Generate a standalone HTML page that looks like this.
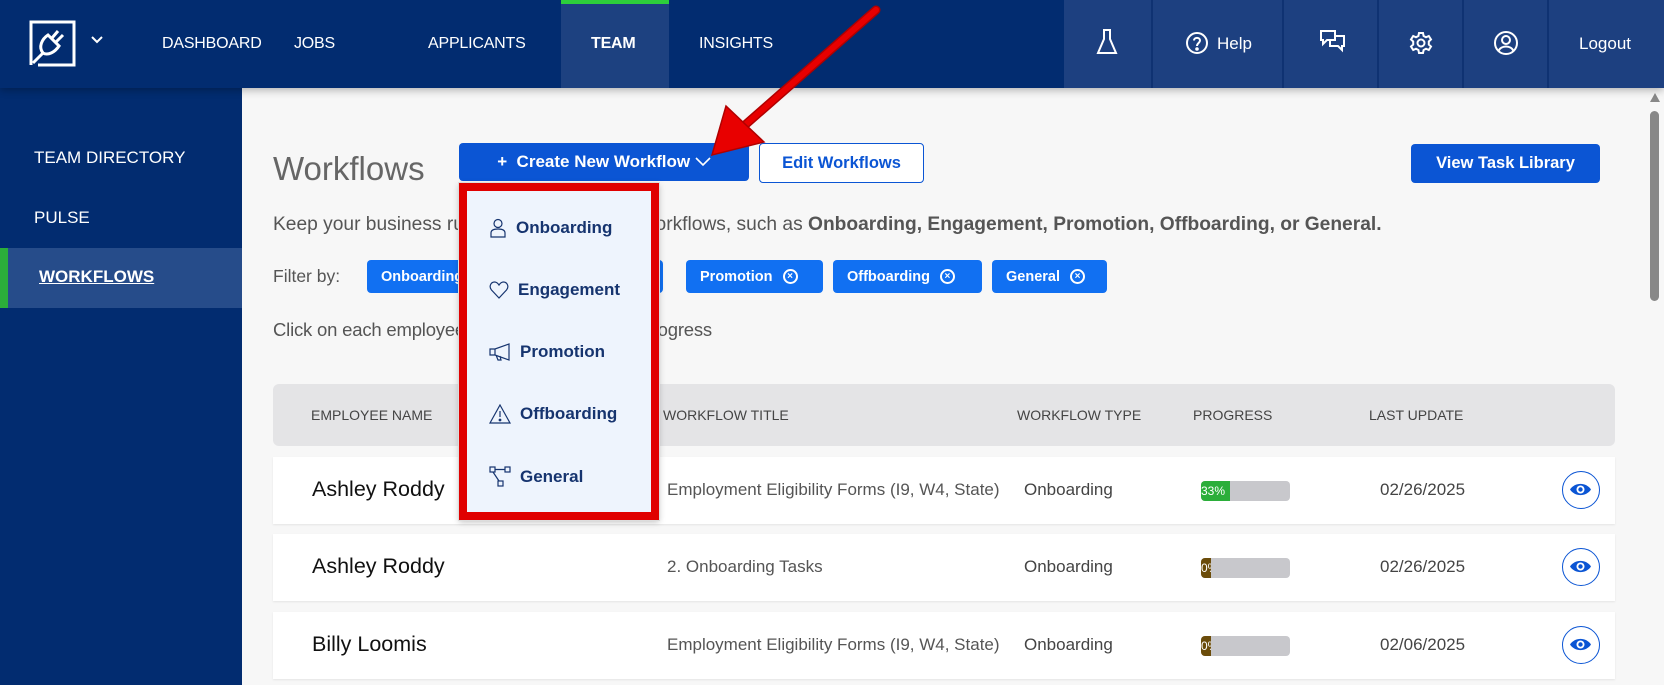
<!DOCTYPE html>
<html><head><meta charset="utf-8"><style>
*{box-sizing:border-box;margin:0;padding:0}
body{width:1664px;height:685px;overflow:hidden;background:#f7f7f7;font-family:"Liberation Sans",sans-serif;position:relative}
.abs{position:absolute}
.hdr{left:0;top:0;width:1664px;height:88px;background:#022c70;box-shadow:0 2px 8px rgba(0,0,0,.3);z-index:2}
.nav{top:35px;color:#fff;font-size:16px;letter-spacing:-.2px}
.rt{top:0;height:88px;background:#1d4080;border-left:2px solid #0f3272}
.side{left:0;top:88px;width:242px;height:597px;background:#022c70}
.side div{position:absolute;color:#fff;font-size:17px}
.btn{border-radius:4px;font-size:16px;font-weight:bold;display:flex;align-items:center;justify-content:center}
.chip{top:260px;height:33px;background:#1170f2;color:#fff;border-radius:4px;font-size:14.5px;font-weight:bold;display:flex;align-items:center;padding-left:14px}
.chip i{font-style:normal;display:inline-block;width:15px;height:15px;border:2px solid #fff;border-radius:50%;font-size:10px;line-height:11px;text-align:center;margin-left:10px}
.th{top:407px;font-size:14px;color:#444}
.row{left:273px;width:1342px;height:67px;background:#fff;box-shadow:0 1px 2px rgba(0,0,0,.08)}
.row div{position:absolute}
.nm{left:39px;top:20px;font-size:21.5px;color:#111}
.tt{left:394px;top:23px;font-size:17px;color:#555}
.ty{left:751px;top:23px;font-size:17px;color:#444}
.bar{left:928px;top:24px;width:89px;height:20px;background:#c8c8cc;border-radius:4px;overflow:hidden}
.dt{left:1107px;top:23px;font-size:17px;color:#444}
.eye{left:1289px;top:14px;width:38px;height:38px;border:1.5px solid #0b55d4;border-radius:50%}
.dd{left:459px;top:183px;width:200px;height:337px;background:#eef4fd;border:8px solid #e00000;outline:1px solid #ddd;box-shadow:0 2px 6px rgba(0,0,0,.25);z-index:3}
.it{position:absolute;left:22px;color:#16346f;font-size:17px;font-weight:bold;display:flex;align-items:center;gap:9px}
</style></head><body>
<div class="abs hdr">
 <svg class="abs" style="left:28px;top:19px" width="48" height="50" viewBox="0 0 48 50" fill="none" stroke="#fff" stroke-width="3"><path d="M10 46 H46 V3 H3 V46"/><path d="M5 44 L15 34"/><path d="M15 34 C10 28 14 20 20 16 L31 27 C27 33 20 37 15 34Z"/><path d="M24 19 L30 12 M28 23 L35 16"/></svg>
 <svg class="abs" style="left:91px;top:36px" width="12" height="8" viewBox="0 0 12 8" fill="none" stroke="#fff" stroke-width="2"><path d="M1 1 L6 6 L11 1"/></svg>
 <div class="abs nav" style="left:162px">DASHBOARD</div>
 <div class="abs nav" style="left:294px">JOBS</div>
 <div class="abs nav" style="left:428px">APPLICANTS</div>
 <div class="abs" style="left:561px;top:0;width:108px;height:88px;background:#1d4180;border-top:4px solid #2dcf3b"></div>
 <div class="abs nav" style="left:591px;font-weight:bold">TEAM</div>
 <div class="abs nav" style="left:699px">INSIGHTS</div>
 <div class="abs rt" style="left:1064px;width:87px;border-left:none"><svg style="position:absolute;left:32px;top:28px" width="22" height="28" viewBox="0 0 22 28" fill="none" stroke="#fff" stroke-width="2"><path d="M7 2 H15 M8 2 V11 L2 25 H20 L14 11 V2"/></svg></div>
 <div class="abs rt" style="left:1151px;width:131px"><svg style="position:absolute;left:32px;top:31px" width="24" height="24" viewBox="0 0 24 24" fill="none" stroke="#fff" stroke-width="2"><circle cx="12" cy="12" r="10"/><path d="M9 9.5 C9 6 15 6 15 9.5 C15 12 12 12 12 15"/><circle cx="12" cy="18" r=".8" fill="#fff"/></svg><span style="position:absolute;left:64px;top:34px;color:#fff;font-size:17px">Help</span></div>
 <div class="abs rt" style="left:1282px;width:95px"><svg style="position:absolute;left:35px;top:29px" width="28" height="26" viewBox="0 0 28 26" fill="none" stroke="#fff" stroke-width="2"><path d="M2 2 H16 V11 H8 L4 15 V11 H2Z"/><path d="M16 7 H25 V17 H23 V21 L19 17 H11 V11"/></svg></div>
 <div class="abs rt" style="left:1377px;width:85px"><svg style="position:absolute;left:30px;top:31px" width="24" height="24" viewBox="0 0 24 24" fill="none" stroke="#fff" stroke-width="2"><circle cx="12" cy="12" r="3.5"/><path d="M10 2 H14 L14.6 5 L17 6.3 L19.8 5 L22 8.5 L19.8 10.5 V13.5 L22 15.5 L19.8 19 L17 17.7 L14.6 19 L14 22 H10 L9.4 19 L7 17.7 L4.2 19 L2 15.5 L4.2 13.5 V10.5 L2 8.5 L4.2 5 L7 6.3 L9.4 5Z"/></svg></div>
 <div class="abs rt" style="left:1462px;width:85px"><svg style="position:absolute;left:29px;top:30px" width="26" height="26" viewBox="0 0 26 26" fill="none" stroke="#fff" stroke-width="2"><circle cx="13" cy="13" r="11"/><circle cx="13" cy="10" r="4"/><path d="M5.5 21 C8 15 18 15 20.5 21"/></svg></div>
 <div class="abs rt" style="left:1547px;width:117px"><span style="position:absolute;left:30px;top:34px;color:#fff;font-size:17px">Logout</span></div>
</div>
<div class="abs side">
 <div style="left:34px;top:60px">TEAM DIRECTORY</div>
 <div style="left:34px;top:120px">PULSE</div>
 <div style="left:0;top:160px;width:242px;height:60px;background:#264c8a;border-left:8px solid #2bae3a"></div>
 <div style="left:39px;top:179px;font-weight:bold;text-decoration:underline">WORKFLOWS</div>
</div>
<div class="abs" style="left:1650px;top:93px;width:0;height:0;border-left:5px solid transparent;border-right:5px solid transparent;border-bottom:9px solid #888"></div>
<div class="abs" style="left:1650px;top:111px;width:9px;height:190px;background:#888;border-radius:5px"></div>

<div class="abs" style="left:273px;top:150px;font-size:33px;color:#666">Workflows</div>
<div class="abs btn" style="left:459px;top:143px;width:290px;height:38px;background:#0b55d4;color:#fff;font-size:17px">+&nbsp; Create New Workflow&nbsp;
<svg width="16" height="10" viewBox="0 0 16 10" fill="none" stroke="#fff" stroke-width="1.6"><path d="M1 1 L8 8 L15 1"/></svg></div>
<div class="abs btn" style="left:759px;top:143px;width:165px;height:40px;border:1.5px solid #0b55d4;background:#fff;color:#0b55d4;font-size:16.5px">Edit Workflows</div>
<div class="abs btn" style="left:1411px;top:144px;width:189px;height:39px;background:#0b55d4;color:#fff;font-size:16.5px">View Task Library</div>

<div class="abs" style="left:273px;top:214px;font-size:19.2px;color:#555;white-space:nowrap">Keep your business running smoothly with Workflows, such as <b>Onboarding, Engagement, Promotion, Offboarding, or General.</b></div>
<div class="abs" style="left:273px;top:266px;font-size:17.5px;color:#555">Filter by:</div>
<div class="abs chip" style="left:367px;width:150px">Onboarding <i>×</i></div>
<div class="abs chip" style="left:527px;width:136px">Engagement <i>×</i></div>
<div class="abs chip" style="left:686px;width:137px">Promotion <i>×</i></div>
<div class="abs chip" style="left:833px;width:149px">Offboarding <i>×</i></div>
<div class="abs chip" style="left:992px;width:115px">General <i>×</i></div>
<div class="abs" style="left:273px;top:319px;font-size:18.5px;color:#555;white-space:nowrap;letter-spacing:-.2px">Click on each employee's workflow to view its progress</div>

<div class="abs" style="left:273px;top:384px;width:1342px;height:62px;background:#e4e4e6;border-radius:6px"></div>
<div class="abs th" style="left:311px">EMPLOYEE NAME</div>
<div class="abs th" style="left:663px">WORKFLOW TITLE</div>
<div class="abs th" style="left:1017px">WORKFLOW TYPE</div>
<div class="abs th" style="left:1193px">PROGRESS</div>
<div class="abs th" style="left:1369px">LAST UPDATE</div>

<div class="abs row" style="top:457px"><div class="nm">Ashley Roddy</div><div class="tt">Employment Eligibility Forms (I9, W4, State)</div><div class="ty">Onboarding</div><div class="bar"><div style="position:absolute;left:0;top:0;width:29px;height:20px;background:#2bae3a;color:#fff;font-size:12px;line-height:20px">33%</div></div><div class="dt">02/26/2025</div><div class="eye"><svg width="35" height="35" viewBox="0 0 35 35"><path d="M7 17.5 C12 10 23 10 28 17.5 C23 25 12 25 7 17.5Z" fill="#0b55d4"/><circle cx="17.5" cy="17.5" r="4" fill="#fff"/><circle cx="17.5" cy="17.5" r="2.2" fill="#0b55d4"/></svg></div></div>
<div class="abs row" style="top:534px"><div class="nm">Ashley Roddy</div><div class="tt">2. Onboarding Tasks</div><div class="ty">Onboarding</div><div class="bar"><div style="position:absolute;left:0;top:0;width:10px;height:20px;background:#6b4c0a;color:#fff;font-size:12px;line-height:20px;overflow:hidden">0%</div></div><div class="dt">02/26/2025</div><div class="eye"><svg width="35" height="35" viewBox="0 0 35 35"><path d="M7 17.5 C12 10 23 10 28 17.5 C23 25 12 25 7 17.5Z" fill="#0b55d4"/><circle cx="17.5" cy="17.5" r="4" fill="#fff"/><circle cx="17.5" cy="17.5" r="2.2" fill="#0b55d4"/></svg></div></div>
<div class="abs row" style="top:612px"><div class="nm">Billy Loomis</div><div class="tt">Employment Eligibility Forms (I9, W4, State)</div><div class="ty">Onboarding</div><div class="bar"><div style="position:absolute;left:0;top:0;width:10px;height:20px;background:#6b4c0a;color:#fff;font-size:12px;line-height:20px;overflow:hidden">0%</div></div><div class="dt">02/06/2025</div><div class="eye"><svg width="35" height="35" viewBox="0 0 35 35"><path d="M7 17.5 C12 10 23 10 28 17.5 C23 25 12 25 7 17.5Z" fill="#0b55d4"/><circle cx="17.5" cy="17.5" r="4" fill="#fff"/><circle cx="17.5" cy="17.5" r="2.2" fill="#0b55d4"/></svg></div></div>

<div class="abs dd">
 <div class="it" style="top:27px"><svg width="18" height="20" viewBox="0 0 18 20" fill="none" stroke="#16346f" stroke-width="1.2"><circle cx="9" cy="5.5" r="4"/><path d="M2 19 V15 C2 12 5 11 9 11 C13 11 16 12 16 15 V19Z"/></svg>Onboarding</div>
 <div class="it" style="top:89px"><svg width="20" height="18" viewBox="0 0 20 18" fill="none" stroke="#16346f" stroke-width="1.2"><path d="M10 17 L2.5 9 C-0.5 5.5 2 1 5.5 1 C7.5 1 9 2.5 10 4 C11 2.5 12.5 1 14.5 1 C18 1 20.5 5.5 17.5 9Z"/></svg>Engagement</div>
 <div class="it" style="top:151px"><svg width="22" height="18" viewBox="0 0 22 18" fill="none" stroke="#16346f" stroke-width="1.2"><path d="M1 6 H6 L20 1 V17 L6 12 H1Z M6 6 V12 M7 12 L9 17 H12 L11 13"/></svg>Promotion</div>
 <div class="it" style="top:213px"><svg width="22" height="20" viewBox="0 0 22 20" fill="none" stroke="#16346f" stroke-width="1.2"><path d="M11 1 L21 19 H1Z M11 7 V13"/><circle cx="11" cy="16" r=".8" fill="#16346f"/></svg>Offboarding</div>
 <div class="it" style="top:275px"><svg width="22" height="22" viewBox="0 0 22 22" fill="none" stroke="#16346f" stroke-width="1.2"><rect x="1" y="1" width="5" height="5"/><rect x="16" y="1" width="5" height="5"/><rect x="9" y="15" width="5" height="5"/><path d="M6 3.5 H16 M4 6 L10 15"/></svg>General</div>
</div>

<svg class="abs" style="left:0;top:0;z-index:4" width="1664" height="685"><path d="M876 10 L745 125" stroke="#b00000" stroke-width="9" stroke-linecap="round"/><path d="M876 10 L745 125" stroke="#e80000" stroke-width="6" stroke-linecap="round"/><polygon points="712,155 726,106 764,142" fill="#e80000" stroke="#b00000" stroke-width="1.5"/></svg>
</body></html>
